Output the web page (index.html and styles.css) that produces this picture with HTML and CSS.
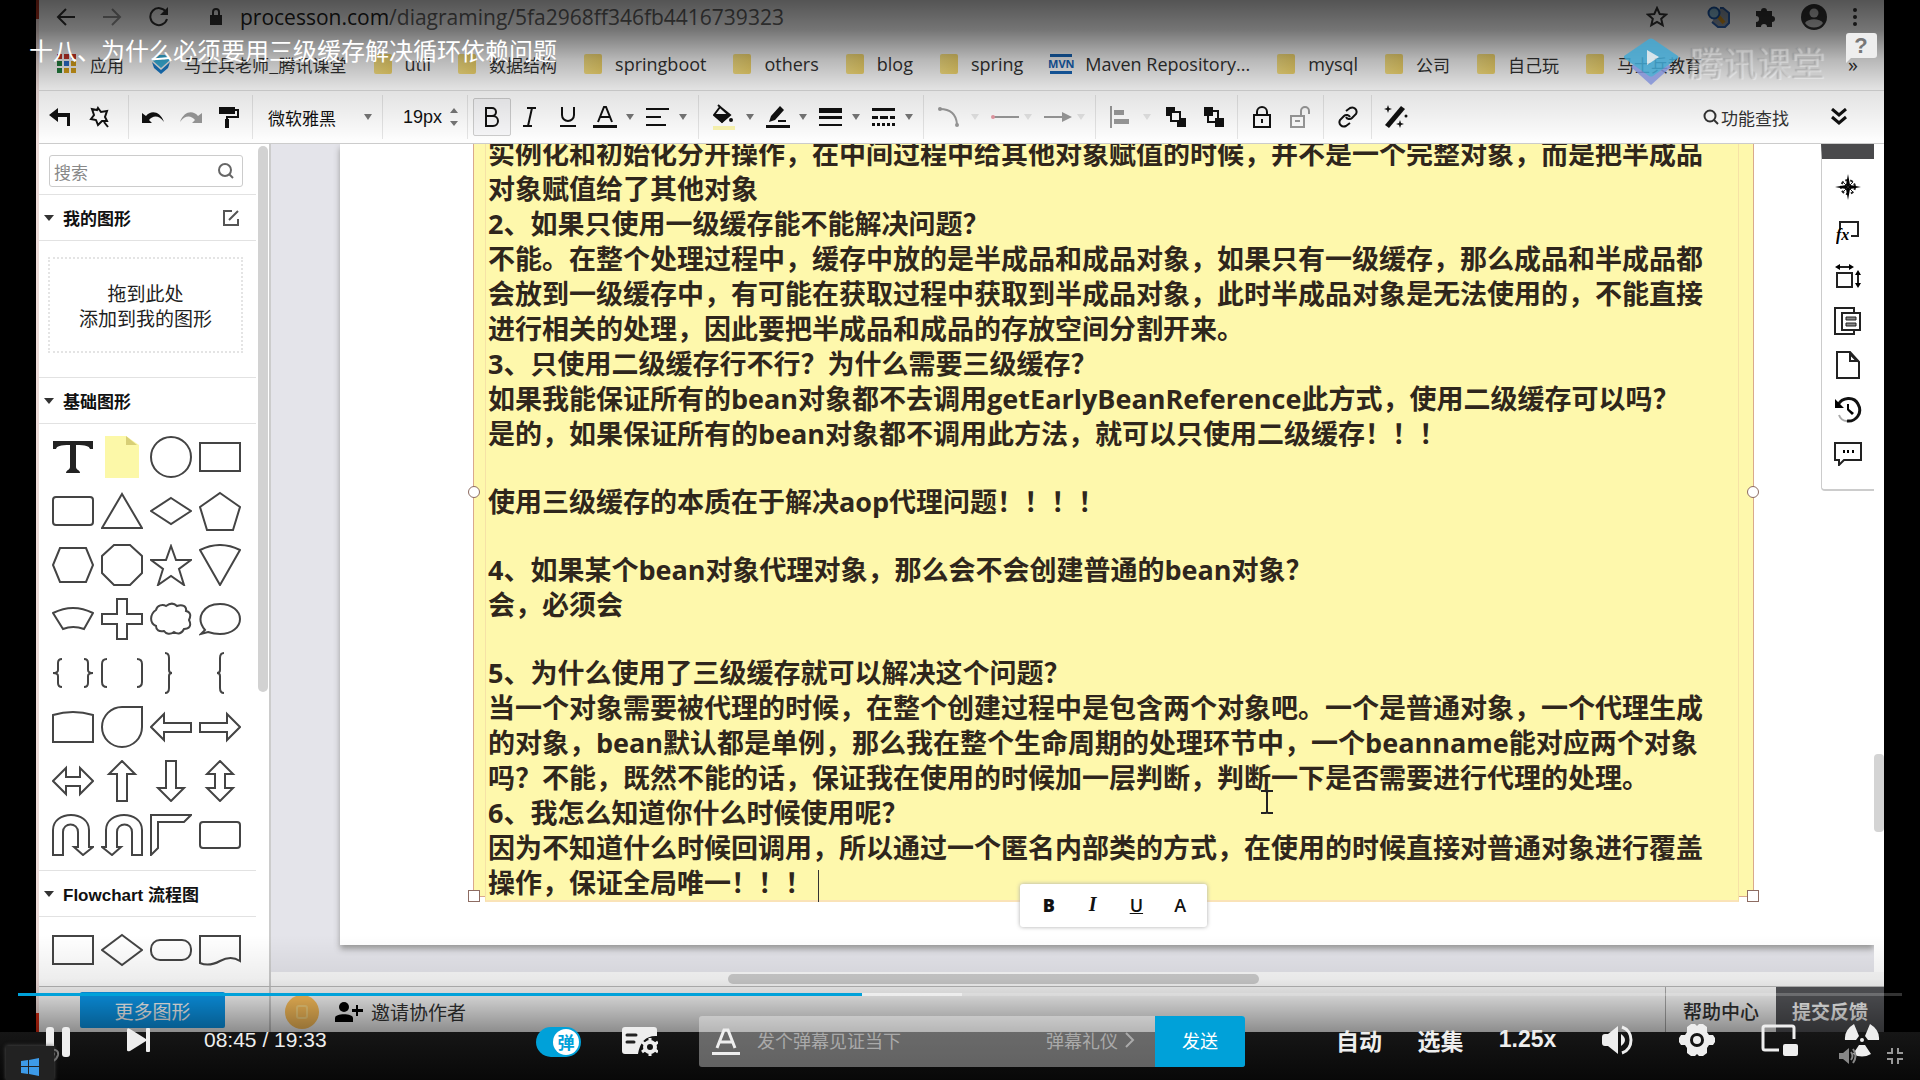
FILE: index.html
```html
<!DOCTYPE html>
<html lang="zh-CN">
<head>
  <meta charset="UTF-8">
  <meta name="viewport" content="width=device-width, initial-scale=1.0">
  <title>十八、为什么必须要用三级缓存解决循环依赖问题</title>
  <link rel="stylesheet" href="styles.css">
</head>
<body>

<div class="stage">

  <!-- recorded screen -->
  <div class="screen">
    <header class="address-bar">
      <button class="nav-btn" aria-label="后退"><svg width="20" height="20" viewBox="0 0 20 20"><path d="M19 10H2M10 2L2 10l8 8" class="ln"/></svg></button>
      <button class="nav-btn dim" aria-label="前进"><svg width="20" height="20" viewBox="0 0 20 20"><path d="M1 10h17M10 2l8 8-8 8" class="ln"/></svg></button>
      <button class="nav-btn" aria-label="刷新"><svg width="22" height="20" viewBox="0 0 22 20"><path d="M18 5a8.500 8.500 0 1 0 1 7" class="ln"/><path d="M20 0v8h-8z"/></svg></button>
      <svg class="padlock" width="14" height="18" viewBox="0 0 14 18"><path d="M1 7h12v10H1z"/><path d="M4 8V4a3 3 0 0 1 6 0v4" class="ln"/></svg>
      <span class="url"><b>processon.com</b>/diagraming/5fa2968ff346fb4416739323</span>
      <div class="browser-tools">
        <button aria-label="收藏"><svg width="22" height="22" viewBox="0 0 22 22"><path d="M11 2l2.700 6 6.300.6-4.800 4.200 1.500 6.400L11 15.800l-5.700 3.400 1.500-6.400L2 8.600 8.300 8z" class="ln"/></svg></button>
        <button aria-label="搜索插件"><svg width="24" height="22" viewBox="0 0 24 22"><path d="M14 2h3l6 5v10l-4 4h-7l-6-5" fill="#8f9aa8" stroke="#2c5fa8" stroke-width="2"/><path d="M12 10l6 7" stroke="#c98b1c" stroke-width="4"/><circle cx="8" cy="7" r="5.500" fill="#8cc0dc" stroke="#1b57a8" stroke-width="2"/></svg></button>
        <button aria-label="扩展程序"><svg width="22" height="22" viewBox="0 0 22 22"><path d="M2 5h5a3 3 0 1 1 6 0h5v5a3 3 0 1 1 0 6v5h-5a3 3 0 0 0-6 0H2v-5a3 3 0 0 0 0-6z"/></svg></button>
        <button aria-label="用户"><svg width="28" height="28" viewBox="0 0 28 28"><circle cx="14" cy="14" r="13"/><circle cx="14" cy="10" r="4.500" fill="#ccc"/><path d="M5 20c3-5 15-5 18 0-4 6-14 6-18 0z" fill="#ccc"/></svg></button>
        <button aria-label="菜单"><svg width="6" height="20" viewBox="0 0 6 20"><circle cx="3" cy="3" r="2"/><circle cx="3" cy="10" r="2"/><circle cx="3" cy="17" r="2"/></svg></button>
      </div>
    </header>

    <nav class="bookmarks">
      <a href="#" class="apps"><svg width="20" height="20" viewBox="0 0 20 20"><path d="M0 0h5v5H0zM7 0h5v5H7zM14 0h5v5h-5z" fill="#c9362b"/><path d="M0 7h5v5H0z" fill="#24803f"/><path d="M7 7h5v5H7z" fill="#2b6fd0"/><path d="M14 7h5v5h-5z" fill="#d9a21b"/><path d="M0 14h5v5H0z" fill="#24803f"/><path d="M7 14h5v5H7zM14 14h5v5h-5z" fill="#d9a21b"/></svg><span class="cn">应用</span></a>
      <a href="#" class="ke"><svg width="20" height="20" viewBox="0 0 20 20"><path d="M1 6l5-5h8l5 5-9 8z" fill="#3bbbe8"/><path d="M1 8l9 8 9-8-2 6-7 6-7-6z" fill="#1a7fcf"/></svg><span class="cn">马士兵老师_腾讯课堂</span></a>
      <a href="#"><i class="folder"></i>util</a>
      <a href="#"><i class="folder"></i><span class="cn">数据结构</span></a>
      <a href="#"><i class="folder"></i>springboot</a>
      <a href="#"><i class="folder"></i>others</a>
      <a href="#"><i class="folder"></i>blog</a>
      <a href="#"><i class="folder"></i>spring</a>
      <a href="#"><i class="mvn">MVN</i>Maven Repository...</a>
      <a href="#"><i class="folder"></i>mysql</a>
      <a href="#"><i class="folder"></i><span class="cn">公司</span></a>
      <a href="#"><i class="folder"></i><span class="cn">自己玩</span></a>
      <a href="#"><i class="folder"></i><span class="cn">马士兵教育</span></a>
      <button class="more">»</button>
    </nav>

    <div class="toolbar">
      <div class="group first">
        <button class="tool back" aria-label="返回"><svg width="22" height="20" viewBox="0 0 22 20"><path d="M0 8l9-7v5h12v13h-3v-9H9v5z"/></svg></button>
        <button class="tool back" aria-label="美化"><svg width="22" height="22" viewBox="0 0 22 22"><path d="M9 2l3 4 6-1-2 6 2 4-5 0-4 4-2-5-5-1 3-4-2-6 5 1z" class="ln"/><path d="M15 16l4 5" class="ln"/></svg></button>
      </div>
      <div class="group">
        <button class="tool" aria-label="撤销"><svg width="22" height="18" viewBox="0 0 22 18"><path d="M0 5v10h10L7 12c4-5 10-5 15 2C18 3 9 2 4 8z"/></svg></button>
        <button class="tool" aria-label="重做" disabled><svg width="22" height="18" viewBox="0 0 22 18"><path d="M22 5v10H12l3-3c-4-5-10-5-15 2C4 3 13 2 18 8z"/></svg></button>
        <button class="tool" aria-label="格式刷"><svg width="22" height="22" viewBox="0 0 22 22"><path d="M1 1h16v7H1z"/><path d="M17 4h3v7H9v3" class="ln"/><path d="M7 13h4v9H7z"/></svg></button>
      </div>
      <div class="group font-group">
        <select aria-label="字体"><option>微软雅黑</option></select>
        <i class="caret"></i>
      </div>
      <div class="group size-group">
        <input type="text" value="19px" aria-label="字号">
        <svg width="8" height="18" viewBox="0 0 8 18" class="spin"><path d="M0 5l4-5 4 5zM0 13l4 5 4-5z"/></svg>
      </div>
      <div class="group tight">
        <button class="tool active" aria-label="粗体"><svg width="18" height="20" viewBox="0 0 18 20"><path d="M3 1h6a4 4 0 0 1 0 8H3zM3 9h7a4.500 4.500 0 0 1 0 10H3z" class="ln"/></svg></button>
        <button class="tool" aria-label="斜体"><svg width="16" height="20" viewBox="0 0 16 20"><path d="M5 1h9M1 19h9M10 1L6 19" class="ln"/></svg></button>
        <button class="tool" aria-label="下划线"><svg width="18" height="22" viewBox="0 0 18 22"><path d="M3 1v8a5 5 0 0 0 12 0V1M1 20h16" class="ln"/></svg></button>
        <button class="tool drop" aria-label="字体颜色"><svg width="24" height="22" viewBox="0 0 24 22"><path d="M5 16L11 1h2l6 15M7 11h10" class="ln"/><path d="M0 19h24v3H0z"/></svg><i class="caret"></i></button>
        <button class="tool drop" aria-label="对齐"><svg width="24" height="20" viewBox="0 0 24 20"><path d="M0 2h23M0 10h15M0 18h20" class="ln"/></svg><i class="caret"></i></button>
      </div>
      <div class="group wide">
        <button class="tool drop" aria-label="填充"><svg width="22" height="26" viewBox="0 0 22 26"><path d="M5 1l12 11M7 3L1 11l8 7 8-7z" class="ln"/><path d="M1 10h16l-8 9z"/><circle cx="18" cy="16" r="2"/><path d="M0 22h22v4H0z" fill="#faf5b0"/></svg><i class="caret"></i></button>
        <button class="tool drop" aria-label="线条颜色"><svg width="24" height="22" viewBox="0 0 24 22"><path d="M5 10L14 0l4 4-9 10-6 2zM12 14h8v2h-8zM0 19h24v3H0z"/></svg><i class="caret"></i></button>
        <button class="tool drop" aria-label="线宽"><svg width="24" height="20" viewBox="0 0 24 20"><path d="M0 1h23v5H0zM0 9h23v3H0zM0 17h23v2H0z"/></svg><i class="caret"></i></button>
        <button class="tool drop" aria-label="线型"><svg width="24" height="20" viewBox="0 0 24 20"><path d="M0 1h23v3H0zM0 9h6v3H0zM8 9h8v3H8zM18 9h5v3h-5zM0 16h3v3H0zM5 16h3v3H5zM10 16h3v3h-3zM15 16h3v3h-3zM20 16h3v3h-3z"/></svg><i class="caret"></i></button>
      </div>
      <div class="group tight wide">
        <button class="tool drop" disabled aria-label="连线类型"><svg width="22" height="22" viewBox="0 0 22 22"><path d="M2 3c10 0 16 5 17 15" class="ln"/><circle cx="2" cy="3" r="2"/><circle cx="19" cy="19" r="2"/></svg><i class="caret"></i></button>
        <button class="tool drop" disabled aria-label="起点"><svg width="28" height="8" viewBox="0 0 28 8"><path d="M2 4h26" class="ln"/><circle cx="2" cy="4" r="2" fill="#e79aa5"/></svg><i class="caret"></i></button>
        <button class="tool drop" disabled aria-label="终点"><svg width="28" height="10" viewBox="0 0 28 10"><path d="M0 5h20" class="ln"/><path d="M18 0l10 5-10 5z"/></svg><i class="caret"></i></button>
      </div>
      <div class="group wide">
        <button class="tool drop" disabled aria-label="图形对齐"><svg width="20" height="22" viewBox="0 0 20 22"><path d="M0 0h2v22H0zM4 4h10v5H4zM4 13h15v5H4z"/></svg><i class="caret"></i></button>
        <button class="tool" aria-label="置于顶层"><svg width="22" height="22" viewBox="0 0 22 22"><path d="M1 1h9v9H1zM12 12h9v9h-9z"/><path d="M6 6h9v9H6z" fill="#fff" stroke="#111" stroke-width="2"/></svg></button>
        <button class="tool" aria-label="置于底层"><svg width="22" height="22" viewBox="0 0 22 22"><path d="M10 5h5v8M5 10v6h8" class="ln"/><path d="M1 1h9v9H1zM12 12h9v9h-9z"/></svg></button>
      </div>
      <div class="group">
        <button class="tool" aria-label="锁定"><svg width="18" height="22" viewBox="0 0 18 22"><path d="M1 9h16v12H1zM4 9V6a5 5 0 0 1 10 0v3M9 13v4" class="ln"/></svg></button>
        <button class="tool" disabled aria-label="解锁"><svg width="20" height="22" viewBox="0 0 20 22"><path d="M1 10h13v11H1zM11 10V5a4 4 0 0 1 8 0v3M5 15h5" class="ln"/></svg></button>
      </div>
      <div class="group">
        <button class="tool" aria-label="链接"><svg width="22" height="22" viewBox="0 0 22 22"><path d="M9 5l4-3c4-2 8 2 6 6l-4 4c-2 2-5 1-6-1M13 17l-4 3c-4 2-8-2-6-6l4-4c2-2 5-1 6 1" class="ln"/></svg></button>
      </div>
      <div class="group last">
        <button class="tool" aria-label="一键美化"><svg width="24" height="24" viewBox="0 0 24 24"><path d="M1 20L17 1l4 3L5 23z"/><path d="M4 0l1 3 3 1-3 1-1 3-1-3-3-1 3-1zM16 15l1 3 3 1-3 1-1 3-1-3-3-1 3-1z"/><circle cx="22" cy="11" r="1.500"/></svg></button>
      </div>
      <button class="find"><svg width="16" height="16" viewBox="0 0 16 16"><circle cx="7" cy="7" r="5.500" class="ln"/><path d="M11 11l4 4" class="ln"/></svg>功能查找</button>
      <button class="collapse" aria-label="收起"><svg width="16" height="18" viewBox="0 0 16 18"><path d="M1 1l7 6 7-6M1 9l7 6 7-6" fill="none" stroke="#111" stroke-width="3"/></svg></button>
    </div>

    <main class="editor">
      <aside class="sidebar">
        <div class="panels">
          <div class="search">
            <input type="text" placeholder="搜索" aria-label="搜索">
            <svg width="16" height="16" viewBox="0 0 16 16"><circle cx="7" cy="7" r="6" class="ln"/><path d="M11 11l4 4" class="ln"/></svg>
          </div>
          <h3><i class="tri"></i>我的图形<svg class="edit" width="16" height="16" viewBox="0 0 16 16"><path d="M9 1H1v14h14V9M6 10l9-9" class="ln"/></svg></h3>
          <div class="drop-zone">
            <p>拖到此处<br>添加到我的图形</p>
          </div>
          <h3><i class="tri"></i>基础图形</h3>
          <div class="shapes">
            <svg viewBox="0 0 42 42"><path d="M1 5h40v8h-3c-1-3-4-4-14-4v22c0 3 4 3 4 6H14c0-3 4-3 4-6V9C8 9 5 10 4 13H1z" fill="#222" stroke="none"/></svg>
            <svg viewBox="0 0 42 42"><path d="M4 0h21l13 9v33H4z" fill="#fcf8a8" stroke="none"/><path d="M25 0v9h11z" fill="#d8cf76" stroke="none"/></svg>
            <svg viewBox="0 0 42 42"><circle cx="21" cy="21" r="20"/></svg>
            <svg viewBox="0 0 42 42"><path d="M1 7h40v28H1z"/></svg>
            <svg viewBox="0 0 42 42"><rect x="1" y="7" width="40" height="28" rx="3"/></svg>
            <svg viewBox="0 0 42 42"><path d="M21 4l20 34H1z"/></svg>
            <svg viewBox="0 0 42 42"><path d="M21 8l20 13-20 13L1 21z"/></svg>
            <svg viewBox="0 0 42 42"><path d="M21 3l20 14-7 23H8L1 17z"/></svg>
            <svg viewBox="0 0 42 42"><path d="M8 4h26l7 17-7 17H8L1 21z"/></svg>
            <svg viewBox="0 0 42 42"><path d="M13 1h16l12 11v17L29 41H13L1 29V12z"/></svg>
            <svg viewBox="0 0 42 42"><path d="M21 2l5 14h15L29 25l5 16-13-9-13 9 5-16L1 16h15z"/></svg>
            <svg viewBox="0 0 42 42"><path d="M1 6q20-10 40 0L21 41z"/></svg>
            <svg viewBox="0 0 42 42"><path d="M1 15q20-10 40 0l-9 16q-11-4-21 0z"/></svg>
            <svg viewBox="0 0 42 42"><path d="M16 1h10v15h15v10H26v15H16V26H1V16h15z"/></svg>
            <svg viewBox="0 0 42 42"><path d="M6 12c1-5 7-6 10-4 4-3 8-3 11 0 5-2 10 0 9 5 5 1 5 5 3 9 3 6 0 9-5 9-3 6-7 5-10 3-4 3-8 2-10-1-5 1-8-1-8-5-7-3-6-12 0-16z"/></svg>
            <svg viewBox="0 0 42 42"><path d="M6 32C-4 20 4 6 21 6c12 0 20 7 20 15S33 36 21 36c-5 0-9-1-12-2l-7 2z"/></svg>
            <svg viewBox="0 0 42 42"><path d="M10 7q-4 0-4 4v7q0 3-5 3 5 0 5 3v7q0 4 4 4M32 7q4 0 4 4v7q0 3 5 3-5 0-5 3v7q0 4-4 4"/></svg>
            <svg viewBox="0 0 42 42"><path d="M6 7q-5 0-5 5v18q0 5 5 5M36 7q5 0 5 5v18q0 5-5 5"/></svg>
            <svg viewBox="0 0 42 42"><path d="M15 1q4 0 4 5v12q0 3 3 3-3 0-3 3v12q0 5-4 5"/></svg>
            <svg viewBox="0 0 42 42"><path d="M25 1q-4 0-4 5v12q0 3-3 3 3 0 3 3v12q0 5 4 5"/></svg>
            <svg viewBox="0 0 42 42"><path d="M1 9q20-6 40 0v27H1z"/></svg>
            <svg viewBox="0 0 42 42"><path d="M21 1h20v20A20 20 0 1 1 21 1z"/></svg>
            <svg viewBox="0 0 42 42"><path d="M1 21L14 8v9h27v9H14v8z"/></svg>
            <svg viewBox="0 0 42 42"><path d="M41 21L28 8v9H1v9h27v8z"/></svg>
            <svg viewBox="0 0 42 42"><path d="M1 21L14 8v9h14V8l13 13-13 13v-8H14v8z"/></svg>
            <svg viewBox="0 0 42 42"><path d="M21 1l13 13h-8v27H16V14H8z"/></svg>
            <svg viewBox="0 0 42 42"><path d="M21 41l13-13h-8V1H16v27H8z"/></svg>
            <svg viewBox="0 0 42 42"><path d="M21 1l13 13h-8v14h8L21 41 8 28h8V14H8z"/></svg>
            <svg viewBox="0 0 42 42"><path d="M1 41V16C1-4 37-4 37 16v17h4L31 41l-9-8h4V18c0-10-15-10-15 0v23z"/></svg>
            <svg viewBox="0 0 42 42"><path d="M41 41V16C41-4 5-4 5 16v17H1l10 8 9-8h-4V18c0-10 15-10 15 0v23z"/></svg>
            <svg viewBox="0 0 42 42"><path d="M1 1h40l-7 7H8v26l-7 7z"/></svg>
            <svg viewBox="0 0 42 42"><rect x="1" y="8" width="40" height="26" rx="3"/></svg>
          </div>
          <h3><i class="tri"></i>Flowchart 流程图</h3>
          <div class="shapes">
            <svg viewBox="0 0 42 42"><path d="M1 7h40v28H1z"/></svg>
            <svg viewBox="0 0 42 42"><path d="M21 6l20 15-20 15L1 21z"/></svg>
            <svg viewBox="0 0 42 42"><rect x="1" y="11" width="40" height="20" rx="9"/></svg>
            <svg viewBox="0 0 42 42"><path d="M1 7h40v25q-9-6-20 0-11 6-20 2z"/></svg>
          </div>
        </div>
        <div class="side-scroll"><i></i></div>
      </aside>

      <section class="canvas">
        <div class="paper-area">
          <div class="paper"></div>

          <div class="note">
            <div class="note-text">
              <p>实例化和初始化分开操作，在中间过程中给其他对象赋值的时候，并不是一个完整对象，而是把半成品对象赋值给了其他对象</p>
              <p>2、如果只使用一级缓存能不能解决问题？</p>
              <p>不能。在整个处理过程中，缓存中放的是半成品和成品对象，如果只有一级缓存，那么成品和半成品都会放到一级缓存中，有可能在获取过程中获取到半成品对象，此时半成品对象是无法使用的，不能直接进行相关的处理，因此要把半成品和成品的存放空间分割开来。</p>
              <p>3、只使用二级缓存行不行？为什么需要三级缓存？</p>
              <p>如果我能保证所有的bean对象都不去调用getEarlyBeanReference此方式，使用二级缓存可以吗？</p>
              <p class="gap-after">是的，如果保证所有的bean对象都不调用此方法，就可以只使用二级缓存！！！</p>
              <p class="gap-after">使用三级缓存的本质在于解决aop代理问题！！！！</p>
              <p>4、如果某个bean对象代理对象，那么会不会创建普通的bean对象？</p>
              <p class="gap-after">会，必须会</p>
              <p>5、为什么使用了三级缓存就可以解决这个问题？</p>
              <p>当一个对象需要被代理的时候，在整个创建过程中是包含两个对象吧。一个是普通对象，一个代理生成的对象，bean默认都是单例，那么我在整个生命周期的处理环节中，一个beanname能对应两个对象吗？不能，既然不能的话，保证我在使用的时候加一层判断，判断一下是否需要进行代理的处理。</p>
              <p>6、我怎么知道你什么时候使用呢？</p>
              <p>因为不知道什么时候回调用，所以通过一个匿名内部类的方式，在使用的时候直接对普通对象进行覆盖操作，保证全局唯一！！！<i class="text-caret"></i></p>
            </div>
            <i class="handle round ml"></i>
            <i class="handle round mr"></i>
            <i class="handle bl"></i>
            <i class="handle br"></i>
          </div>

          <svg class="ibeam" width="14" height="24" viewBox="0 0 14 24"><path d="M1 1h5l1 1 1-1h5M7 2v20M1 23h5l1-1 1 1h5" fill="none" stroke="#222" stroke-width="2"/></svg>

          <div class="mini-bar">
            <button class="b">B</button>
            <button class="i">I</button>
            <button class="u">U</button>
            <button>A</button>
          </div>

          <div class="dock">
            <button aria-label="导航"><svg width="26" height="26" viewBox="0 0 26 26"><circle cx="13" cy="13" r="7" class="ln dots"/><circle cx="13" cy="13" r="3"/><path d="M13 0l2 11 11 2-11 2-2 11-2-11-11-2 11-2z"/><path d="M8 8l10 10M18 8L8 18" stroke="#222"/></svg></button>
            <button aria-label="公式"><svg width="24" height="24" viewBox="0 0 24 24"><path d="M4 10V2h18v14h-7" class="ln"/><text x="0" y="20" class="fx">fx</text></svg></button>
            <button aria-label="尺寸"><svg width="26" height="24" viewBox="0 0 26 24"><path d="M2 9h15v14H2zM2 3h15M23 8v14" class="ln"/><path d="M0 3l5-3v6zM19 3l-5-3v6zM23 6l3 5h-6zM23 24l3-5h-6z"/></svg></button>
            <button aria-label="页面"><svg width="28" height="28" viewBox="0 0 28 28"><path d="M20 5V1H1v26h19v-3" class="ln"/><path d="M8 6h18v17H8z" class="ln"/><path d="M12 10h10v3H12zM12 16h10v3H12z" fill="#888" stroke="#222"/></svg></button>
            <button aria-label="文档"><svg width="24" height="28" viewBox="0 0 24 28"><path d="M1 1h13l9 10v16H1zM14 3v7h7z" class="ln"/></svg></button>
            <button aria-label="历史"><svg width="28" height="28" viewBox="0 0 28 28"><path d="M4 9C8 1 20 0 24 8c5 9-2 18-11 17" fill="none" stroke="#111" stroke-width="3"/><path d="M1 3v9h9zM13 8h2v5l5 4-2 2-5-5z"/><path d="M13 25c-4 0-7-3-8-6" fill="none" stroke="#aaa" stroke-width="2"/></svg></button>
            <button aria-label="评论"><svg width="28" height="24" viewBox="0 0 28 24"><path d="M1 1h26v17H10l-5 5v-5H1z" class="ln"/><path d="M9 8h2v3H9zM13 8h2v3h-2zM18 8h2v3h-2z"/></svg></button>
          </div>
        </div>
        <div class="v-scroll"><i></i></div>
        <div class="h-scroll"><i></i></div>
      </section>
    </main>

    <footer class="status">
      <div class="status-left"><button class="more-shapes">更多图形</button></div>
      <span class="avatar"><i></i></span>
      <button class="invite"><svg width="28" height="20" viewBox="0 0 28 20"><circle cx="9" cy="5" r="5"/><path d="M0 20v-4c0-5 18-5 18 0v4zM21 3h2v4h5v3h-5v4h-2v-4h-4V7h4z"/></svg>邀请协作者</button>
      <a href="#" class="help-center">帮助中心</a>
      <a href="#" class="feedback">提交反馈</a>
    </footer>
  </div>

  <!-- video player chrome -->
  <div class="player">
    <h1>十八、为什么必须要用三级缓存解决循环依赖问题</h1>

    <div class="watermark">
      <svg width="56" height="48" viewBox="0 0 56 48"><path d="M8 29L28 10l20 19-20 18z" fill="#8292d8"/><path d="M1 18L26 1q2-1 4 0l25 17q1 1 0 2L30 38q-2 1-4 0L1 20z" fill="#43a9d4"/><path d="M24 12l12 7-12 8z" fill="#dfeef5"/></svg>
      <span>腾讯课堂</span>
    </div>
    <button class="question" aria-label="帮助"><svg width="31" height="31" viewBox="0 0 31 31"><path d="M3 0h25q3 0 3 3v19q0 3-3 3H5l-5 5V3q0-3 3-3z"/><text x="15" y="20" text-anchor="middle">?</text></svg></button>

    <div class="bottom">
      <div class="progress" role="slider" aria-label="播放进度" aria-valuenow="525" aria-valuemax="1173">
        <div class="buffered" style="width: 50.1%"></div>
        <div class="played" style="width: 44.8%"></div>
      </div>
      <div class="controls">
        <button class="pause" aria-label="暂停"><svg width="24" height="30" viewBox="0 0 24 30"><rect width="8" height="30" rx="3"/><rect x="16" width="8" height="30" rx="3"/></svg></button>
        <button class="next" aria-label="下一集"><svg width="24" height="24" viewBox="0 0 24 24"><path d="M0 2q0-3 3-1l16 10q2 1 0 2L3 23q-3 1-3-1z"/><rect x="19" width="4" height="24" rx="1"/></svg></button>
        <span class="time">08:45 / 19:33</span>

        <label class="danmu-switch"><input type="checkbox" checked aria-label="弹幕"><span>弹</span></label>
        <button class="danmu-set" aria-label="弹幕设置"><svg width="36" height="30" viewBox="0 0 36 30"><path d="M3 0h29q3 0 3 3v6q-16-1-19 18H3q-3 0-3-3V3q0-3 3-3z"/><path d="M5 8h9M5 15h7" stroke="#222" stroke-width="3" stroke-linecap="round"/><circle cx="28" cy="20" r="5" fill="none" stroke="#eee" stroke-width="4"/><path d="M28 11v4M28 25v4M20 15l4 3M32 22l4 3M20 25l4-3M32 18l4-3" stroke="#eee" stroke-width="3"/></svg></button>
        <div class="danmu-box">
          <svg width="28" height="28" viewBox="0 0 28 28"><path d="M5 20L12 2h4l7 18M8 14h12" fill="none" stroke="#eee" stroke-width="3"/><path d="M0 24h28v3H0z"/></svg>
          <input type="text" placeholder="发个弹幕见证当下" aria-label="弹幕">
          <a href="#">弹幕礼仪<svg width="10" height="16" viewBox="0 0 10 16"><path d="M1 1l7 7-7 7" fill="none" stroke="#aaa" stroke-width="2"/></svg></a>
          <button class="send">发送</button>
        </div>

        <div class="right">
          <button class="word">自动</button>
          <button class="word">选集</button>
          <button class="word">1.25x</button>
          <button aria-label="音量"><svg width="32" height="30" viewBox="0 0 32 30"><path d="M0 12q0-3 3-3h3L16 1v28L6 21H3q-3 0-3-3z"/><path d="M19 9q8 6 0 12z"/><path d="M20 2c12 4 12 22 0 26" fill="none" stroke="#eee" stroke-width="3"/></svg></button>
          <button aria-label="设置"><svg width="36" height="34" viewBox="0 0 36 34"><path fill-rule="evenodd" d="M12 1h4l2 2 2-2h4l4 3v5l2 3h4l2 3v4l-2 3h-4l-2 3v5l-4 3h-4l-2-2-2 2h-4l-4-3v-5l-2-3H2l-2-3v-4l2-3h4l2-3V4zM18 10a7 7 0 1 0 0 14 7 7 0 0 0 0-14z"/><circle cx="18" cy="17" r="4"/></svg></button>
          <button aria-label="小窗"><svg width="38" height="32" viewBox="0 0 38 32"><path d="M33 15V4q0-2-2-2H4Q2 2 2 4v20q0 2 2 2h14" fill="none" stroke="#eee" stroke-width="3"/><rect x="22" y="20" width="15" height="12" rx="2"/></svg></button>
          <button aria-label="全屏"><svg width="36" height="34" viewBox="0 0 36 34"><path d="M10 1l5 12-3 4H1Q0 7 10 1zM26 1l-5 12 3 4h11q1-10-9-16zM15 22h6l6 9q-9 5-18 0z"/><circle cx="18" cy="17" r="2"/></svg></button>
        </div>
      </div>
    </div>

    <!-- desktop taskbar remnants -->
    <svg class="remnant" width="10" height="14" viewBox="0 0 10 14"><path d="M1 2q8-1 7 5-1 4-5 6" fill="none" stroke="#777" stroke-width="2"/><circle cx="3" cy="6" r="2" fill="#777"/></svg>
    <div class="taskbar">
      <svg width="18" height="18" viewBox="0 0 18 18"><path d="M0 3l7-1v6H0zM8 2l10-2v8H8zM0 9h7v7l-7-1zM8 9h10v9L8 16z" fill="#3d9be9"/></svg>
    </div>
    <div class="tray">
      <svg width="18" height="18" viewBox="0 0 18 18"><path d="M0 6h4l6-5v16l-6-5H0z"/><path d="M12 5q3 4 0 8M14 2q5 7 0 14" fill="none" stroke="#888" stroke-width="2"/></svg>
      <svg width="16" height="16" viewBox="0 0 16 16"><path d="M5 0v5H0M11 0v5h5M5 16v-5H0M11 16v-5h5" fill="none" stroke="#999" stroke-width="2"/></svg>
    </div>
  </div>

</div>

</body>
</html>
```
FILE: styles.css
```css
* {
  box-sizing: border-box;
}

body {
  margin: 0;
  background: #000;
  font-family: "Noto Sans CJK SC", sans-serif;
  color: #333;
}

button, input, select {
  font-family: inherit;
  border: none;
  background: none;
  padding: 0;
  margin: 0;
  color: inherit;
}

a {
  color: inherit;
  text-decoration: none;
}

p, h1, h3 {
  margin: 0;
}

i {
  font-style: normal;
}

svg {
  display: block;
  flex: none;
}

/* stroked part of an icon */
.ln {
  fill: none;
  stroke: currentColor;
  stroke-width: 2;
}

.stage {
  position: relative;
  height: 100vh;
  display: flex;
  flex-direction: column;
  padding: 0 36px 48px;
  overflow: hidden;
  background: #000;
}

.screen {
  flex: 1;
  min-height: 0;
  display: flex;
  flex-direction: column;
  background: #fff;
  border-left: 3px solid #f6eceb;
  border-image: linear-gradient(#b5341f 20px, #eedcd9 20px, #eedcd9 calc(100% - 20px), #e02a10 calc(100% - 20px)) 1;
}

/* Browser */
.address-bar {
  height: 34px;
  flex: none;
  display: flex;
  align-items: center;
  padding: 0 26px 0 17px;
  color: #333;
}

.nav-btn {
  width: 46px;
}

.address-bar svg {
  fill: currentColor;
}

.address-bar .ln, .toolbar .ln {
  fill: none;
}

.nav-btn.dim {
  color: #999;
}

.padlock {
  margin: 0 17px 0 15px;
}

.url {
  flex: 1;
  font-family: "Open Sans", sans-serif;
  font-size: 21px;
  color: #666;
}

.url b {
  font-weight: 400;
  color: #222;
}

.browser-tools {
  display: flex;
  align-items: center;
  gap: 24px;
}

.browser-tools button:first-child {
  margin-right: 14px;
}

.bookmarks {
  height: 57px;
  flex: none;
  display: flex;
  align-items: center;
  gap: 27px;
  padding: 4px 26px 0 18px;
  border-bottom: 1px solid #ddd;
  font-family: "Open Sans", sans-serif;
  font-size: 18px;
  white-space: nowrap;
}

.bookmarks a {
  display: flex;
  align-items: center;
  gap: 13px;
}

.cn {
  font-family: "Noto Sans CJK SC", sans-serif;
  font-size: 17px;
}

.folder {
  width: 18px;
  height: 20px;
  border-radius: 2px;
  background: linear-gradient(90deg, #fbe483, #f5d96e);
}

.mvn {
  border-top: 3px solid #1766b8;
  border-bottom: 3px solid #1766b8;
  color: #1766b8;
  font-size: 11px;
  font-weight: 700;
  line-height: 14px;
  width: 22px;
  display: flex;
  justify-content: center;
}

.more {
  margin-left: auto;
  font-size: 20px;
}

/* Editor toolbar */
.toolbar {
  height: 53px;
  flex: none;
  display: flex;
  align-items: center;
  border-bottom: 1px solid #ccc;
  background: #fdfdfd;
  color: #111;
}

.toolbar svg {
  fill: currentColor;
}

.toolbar .spin {
  fill: #777;
}

.group {
  height: 44px;
  display: flex;
  align-items: center;
  flex: none;
  padding: 0 4px 0 5px;
  border-right: 1px solid #e4e4e4;
}

.group.first {
  padding: 0 8px 0 1px;
}

.group.tight {
  padding: 0 5px 0 5px;
}

.group.wide {
  padding: 0 4px 0 8px;
}

.group.last {
  border: none;
}

.tool {
  width: 38px;
  height: 38px;
  display: flex;
  align-items: center;
  justify-content: center;
}

.tool.back {
  width: 40px;
}

.tool.active {
  border: 1px solid #ccc;
  background: #f6f6f8;
  border-radius: 2px;
}

.tool.drop {
  width: 53px;
  justify-content: space-between;
  padding: 0 6px;
}

.tool:disabled {
  color: #999;
}

.caret {
  border: 4px solid transparent;
  border-top: 6px solid #777;
  border-bottom: none;
}

.tool:disabled .caret {
  border-top-color: #e4e4e4;
}

.font-group {
  width: 130px;
  padding: 0 10px 0 15px;
  justify-content: space-between;
}

.font-group select {
  appearance: none;
  font-size: 17px;
  width: 90px;
}

.size-group {
  width: 85px;
  padding: 0 9px 0 20px;
  justify-content: space-between;
}

.size-group input {
  width: 46px;
  font: 18px "Liberation Sans", sans-serif;
}

.find {
  margin-left: auto;
  display: flex;
  align-items: center;
  gap: 2px;
  font-size: 17px;
  color: #333;
}

.collapse {
  margin: 0 37px 0 42px;
}

/* Editor */
.editor {
  flex: 1;
  min-height: 0;
  display: flex;
}

.sidebar {
  width: 232px;
  flex: none;
  display: flex;
  overflow: hidden;
  border-right: 2px solid #ccc;
}

.panels {
  flex: 1;
  min-width: 0;
}

.search {
  margin: 11px 13px 7px 10px;
  height: 32px;
  display: flex;
  align-items: center;
  border: 1px solid #ccc;
  border-radius: 3px;
  padding: 0 8px 0 4px;
}

.search input {
  flex: 1;
  min-width: 0;
  font-size: 17px;
}

.search input::placeholder {
  color: #888;
}

.search svg {
  color: #666;
}

.sidebar h3 {
  height: 47px;
  display: flex;
  align-items: center;
  padding: 0 17px 0 5px;
  border: solid #e2e2e2;
  border-width: 1px 0;
  font-family: "Liberation Sans", "Noto Sans CJK SC", sans-serif;
  font-size: 17px;
  color: #111;
}

.tri {
  border: 5px solid transparent;
  border-top: 6px solid #333;
  border-bottom: none;
  margin-right: 9px;
}

.edit {
  margin-left: auto;
  color: #555;
}

.drop-zone {
  margin: 16px 13px 24px 9px;
  height: 96px;
  display: flex;
  align-items: center;
  justify-content: center;
  border: 2px dotted #e4e4e4;
  text-align: center;
  font-size: 19px;
  line-height: 25px;
  color: #222;
}

.shapes {
  display: grid;
  grid-template-columns: repeat(4, 49px);
  grid-auto-rows: 54px;
  place-items: center;
  padding: 6px 0 8px 9px;
}

.shapes svg {
  width: 42px;
  height: 42px;
  fill: none;
  stroke: #444;
  stroke-width: 2;
}

.side-scroll {
  flex: none;
  width: 13px;
  padding: 2px 0 0 2px;
}

.side-scroll i {
  display: block;
  width: 10px;
  height: 65%;
  border-radius: 5px;
  background: #d2d2d2;
}

.canvas {
  flex: 1;
  min-width: 0;
  display: grid;
  grid-template: 1fr 14px / 1fr 10px;
}

.paper-area {
  position: relative;
  overflow: hidden;
  background: #e4e4ea;
  padding: 0 0 27px 69px;
}

.paper {
  height: 100%;
  background: #fff;
  box-shadow: 0 4px 6px #999;
}

.note {
  position: absolute;
  left: 202px;
  right: 120px;
  bottom: 75px;
  height: 800px;
  border: 1px solid #d9a98c;
  background: #fef8ac;
}

/* the sheet sits a little inside and below the selection frame */
.note-text {
  position: absolute;
  inset: 0 14px -6px 11px;
  padding: 0 3px 0 2px;
  display: flex;
  flex-direction: column;
  justify-content: flex-end;
  background: #fef8ac;
  border: 1px solid #f6e2a6;
  border-bottom: 2px solid #fae3b8;
  font-family: "Open Sans", "Noto Sans CJK SC", sans-serif;
  font-size: 27px;
  font-weight: 700;
  line-height: 35px;
  color: #2f261c;
}

.note-text p {
  max-width: 1236px;
}

.note-text .gap-after {
  margin-bottom: 33px;
}

.text-caret {
  display: inline-block;
  width: 1px;
  height: 32px;
  margin-left: 6px;
  vertical-align: middle;
  background: #333;
}

.note-text p:last-child {
  height: 70px;
}

.handle {
  position: absolute;
  width: 12px;
  height: 12px;
  background: #fff;
  border: 1px solid #8d6c62;
}

.handle.round {
  border-radius: 50%;
  bottom: 398px;
}

.ml, .bl {
  left: -6px;
}

.mr, .br {
  right: -6px;
}

.bl, .br {
  bottom: -6px;
}

.ibeam {
  position: absolute;
  right: 600px;
  bottom: 158px;
}

.mini-bar {
  position: absolute;
  right: 667px;
  bottom: 45px;
  width: 187px;
  height: 43px;
  display: flex;
  align-items: center;
  justify-content: space-around;
  padding: 0 5px 2px 7px;
  background: #fff;
  border-radius: 3px;
  box-shadow: 0 0 4px #aaa;
}

.mini-bar button {
  width: 24px;
  font: 600 18px "Open Sans", sans-serif;
  color: #111;
}

.mini-bar .b {
  font-weight: 800;
}

.mini-bar .i {
  font: italic 700 20px "Liberation Serif", serif;
}

.mini-bar .u {
  text-decoration: underline;
}

.dock {
  position: absolute;
  top: 0;
  right: 0;
  width: 53px;
  height: 347px;
  display: flex;
  flex-direction: column;
  justify-content: space-between;
  padding: 7px 0 14px;
  background: #fff;
  border: solid #ccc;
  border-width: 0 0 2px 1px;
  border-radius: 0 0 0 4px;
  border-top: 15px solid #4a4a4c;
  color: #222;
}

.dock button {
  height: 42px;
  display: flex;
  align-items: center;
  justify-content: center;
}

.dots {
  stroke-dasharray: 3 2;
}

.fx {
  font: italic 700 16px "Liberation Serif", serif;
}

.v-scroll {
  display: flex;
  align-items: flex-end;
  padding-bottom: 140px;
}

.v-scroll i {
  width: 10px;
  height: 78px;
  border-radius: 4px;
  background: #d4d4d4;
}

.h-scroll {
  grid-column: 1 / 3;
  padding: 2px 625px 2px 457px;
  background: #fafafa;
}

.h-scroll i {
  display: block;
  height: 10px;
  border-radius: 5px;
  background: #ccc;
}

/* Status bar */
.status {
  height: 46px;
  flex: none;
  display: flex;
  align-items: center;
  border-top: 1px solid #bbb;
  background: #f8f8f8;
}

.status-left {
  width: 232px;
  height: 100%;
  padding: 5px 0 0 41px;
  border-right: 2px solid #ccc;
}

.more-shapes {
  width: 145px;
  height: 36px;
  border-radius: 2px;
  background: #0b9bf0;
  color: #fff;
  font-size: 19px;
}

.avatar {
  width: 34px;
  height: 34px;
  margin: 5px 16px 0 14px;
  display: grid;
  place-items: center;
  border-radius: 50%;
  background: #ffc25c;
}

.avatar i {
  width: 12px;
  height: 14px;
  border: 2px solid #ffd880;
  border-radius: 3px;
}

.invite {
  display: flex;
  align-items: center;
  gap: 8px;
  padding-top: 4px;
  font-size: 19px;
}

.help-center {
  margin-left: auto;
  height: 100%;
  width: 111px;
  border-left: 1px solid #aaa;
  font-size: 19px;
  font-weight: 500;
  text-align: center;
  line-height: 48px;
}

.feedback {
  height: 100%;
  width: 108px;
  background: #55565a;
  color: #fff;
  font-size: 19px;
  font-weight: 700;
  text-align: center;
  line-height: 48px;
}

/* Player */
.player {
  position: absolute;
  inset: 0;
  display: flex;
  flex-direction: column;
  justify-content: space-between;
  background:
    linear-gradient(rgba(0, 0, 0, 0.67), rgba(0, 0, 0, 0.54) 30px, rgba(0, 0, 0, 0.28) 60px, rgba(0, 0, 0, 0.11) 90px, transparent 140px) top / 100% 140px no-repeat,
    linear-gradient(transparent 10px, rgba(0, 0, 0, 0.07) 54px, rgba(0, 0, 0, 0.14) 68px, rgba(0, 0, 0, 0.43)) 0 calc(100% - 48px) / 100% 107px no-repeat,
    linear-gradient(#161616, #080808) bottom / 100% 48px no-repeat;
  color: #eee;
}

.player svg {
  fill: #eee;
}

.player h1 {
  padding: 32px 0 0 29px;
  font-size: 24px;
  font-weight: 400;
  line-height: 36px;
  color: #fff;
}

.watermark {
  position: absolute;
  top: 38px;
  right: 95px;
  display: flex;
  align-items: center;
  gap: 10px;
  font-size: 34px;
  line-height: 48px;
  color: rgba(190, 190, 190, 0.3);
  text-shadow: 1px 1px 1px rgba(255, 255, 255, 0.4), -1px 0 1px rgba(110, 110, 110, 0.3);
}

.watermark svg {
  opacity: 0.85;
}

.question {
  position: absolute;
  top: 33px;
  right: 43px;
}

.question text {
  fill: #777;
  font: 700 22px "Liberation Sans", sans-serif;
}

.progress {
  position: relative;
  height: 3px;
  margin: 0 18px;
  background: rgba(255, 255, 255, 0.2);
}

.played, .buffered {
  position: absolute;
  top: 0;
  left: 0;
  height: 3px;
  background: #00a1d9;
}

.buffered {
  background: rgba(255, 255, 255, 0.5);
}

.controls {
  display: flex;
  align-items: center;
  padding: 20px 40px 13px 46px;
}

.next {
  margin: 0 53px 0 57px;
  padding-bottom: 4px;
}

.time {
  width: 332px;
  padding-bottom: 4px;
  font: 21px "Liberation Sans", sans-serif;
}

.danmu-switch {
  width: 45px;
  height: 30px;
  display: flex;
  justify-content: flex-end;
  padding: 2px;
  border-radius: 15px;
  background: #00a1d9;
}

.danmu-switch input {
  appearance: none;
}

.danmu-switch span {
  width: 26px;
  border-radius: 50%;
  background: #fff;
  color: #00a1d9;
  font-size: 17px;
  font-weight: 700;
  line-height: 25px;
  text-align: center;
}

.danmu-set {
  margin: 0 41px;
}

.danmu-box {
  flex: 0 1 546px;
  height: 51px;
  display: flex;
  align-items: center;
  padding-left: 13px;
  border-radius: 3px;
  background: rgba(255, 255, 255, 0.36);
  overflow: hidden;
}

.danmu-box input {
  flex: 1;
  min-width: 0;
  margin-left: 17px;
  padding-bottom: 4px;
  font-size: 18px;
}

.danmu-box input::placeholder {
  color: #aaa;
}

.danmu-box a {
  display: flex;
  align-items: center;
  gap: 7px;
  margin-right: 20px;
  padding-bottom: 4px;
  font-size: 18px;
  color: #aaa;
}

.send {
  width: 90px;
  height: 51px;
  padding-bottom: 4px;
  background: #00a1d9;
  color: #fff;
  font-size: 18px;
}

.right {
  flex: 1;
  display: flex;
  align-items: center;
  justify-content: space-between;
  padding: 0 0 4px 91px;
}

.word {
  font: 700 23px "Liberation Sans", "Noto Sans CJK SC", sans-serif;
}

.word + .word {
  margin-left: -10px;
}

.taskbar {
  position: absolute;
  left: 6px;
  bottom: 0;
  width: 48px;
  height: 34px;
  display: flex;
  justify-content: center;
  padding-top: 12px;
  background: #222;
  box-shadow: 0 0 4px #555;
}

.remnant {
  position: absolute;
  left: 50px;
  bottom: 18px;
}

.tray {
  position: absolute;
  right: 17px;
  bottom: 15px;
  display: flex;
  align-items: center;
  gap: 30px;
}

.tray svg {
  fill: #888;
}
```
